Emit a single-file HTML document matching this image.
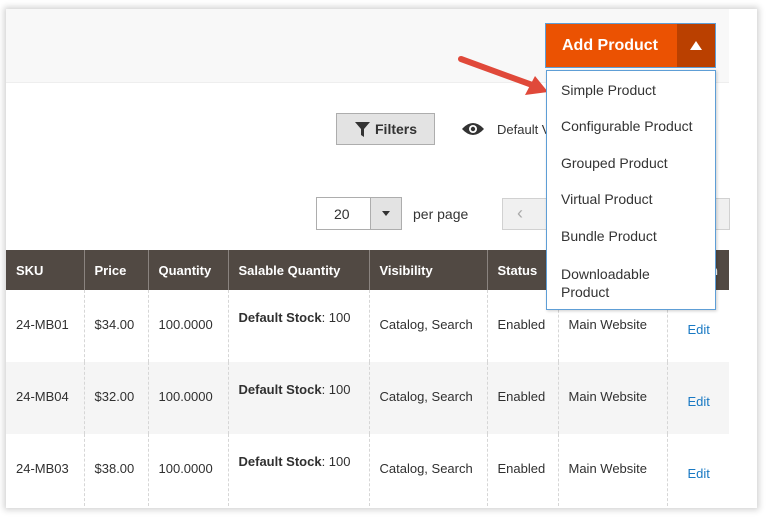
<!DOCTYPE html>
<html><head><style>
*{margin:0;padding:0;box-sizing:border-box}
body{width:768px;height:518px;background:#fff;font-family:"Liberation Sans",sans-serif;position:relative;overflow:hidden;color:#303030}
.card{position:absolute;left:6px;top:9px;width:751px;height:499px;background:#fff;box-shadow:0 0 6px 2px rgba(0,0,0,.18)}
.head{position:absolute;left:6px;top:9px;width:723px;height:74px;background:#f8f8f8;border-bottom:1px solid #eee}
.abs{position:absolute}
.btn{left:545px;top:23px;width:171px;height:45px;background:#eb5202;border:1px solid #5e9ed6;color:#fff;font-weight:bold;font-size:16px}
.btn span{position:absolute;left:16px;top:13px}
.btn i{position:absolute;right:0;top:0;width:38px;height:43px;background:#ba4000}
.btn i:after{content:"";position:absolute;left:13px;top:17px;border-left:6px solid transparent;border-right:6px solid transparent;border-bottom:9px solid #fff}
.dd{left:546px;top:70px;width:170px;height:240px;background:#fff;border:1px solid #5e9ed6;box-shadow:1px 1px 3px rgba(0,0,0,.2);z-index:5;font-size:14px;color:#333}
.dd div{position:absolute;left:14px}
table{position:absolute;left:6px;top:250px;width:723px;border-collapse:collapse;font-size:13px}
th{background:#514943;color:#fff;text-align:left;font-weight:bold;height:40px;padding:0 10px;border-left:1px solid #8a837f;font-size:13px}
th:first-child{border-left:none}
td{height:72px;padding:0 10px 4px;border-left:1px dashed #d6d6d6;color:#303030}
td:first-child{border-left:none}
tr.g td{background:#f5f5f5}
td.s{vertical-align:top;padding-top:20px}
a{color:#1979c3;text-decoration:none}
</style></head><body>
<div class="card"></div>
<div class="head"></div>
<div class="abs btn"><span>Add Product</span><i></i></div>
<svg class="abs" style="left:455px;top:52px" width="100" height="45"><line x1="6" y1="7" x2="80" y2="34" stroke="#e0493a" stroke-width="6" stroke-linecap="round"/><polygon points="93,40 70,43 80,24" fill="#e0493a"/></svg>
<div class="abs" style="left:336px;top:113px;width:99px;height:32px;background:#e3e3e3;border:1px solid #adadad;font-size:14px;font-weight:bold;color:#333">
<svg class="abs" style="left:18px;top:8px" width="16" height="15"><polygon points="0,0 15,0 9,7 9,15 6,13 6,7" fill="#333"/></svg><span class="abs" style="left:38px;top:7px">Filters</span></div>
<svg class="abs" style="left:461px;top:121px" width="24" height="16"><path d="M1 8 Q12 -4 23 8 Q12 20 1 8Z" fill="#333"/><circle cx="12" cy="8" r="4" fill="#fff"/><circle cx="12" cy="8" r="2.2" fill="#333"/></svg>
<div class="abs" style="left:497px;top:122px;font-size:13px;color:#333">Default V</div>
<div class="abs" style="left:316px;top:197px;width:86px;height:33px;border:1px solid #adadad;background:#fff;font-size:14px"><span class="abs" style="left:17px;top:8px">20</span><div class="abs" style="left:53px;top:0;width:31px;height:31px;background:#e3e3e3;border-left:1px solid #adadad"><i class="abs" style="left:11px;top:13px;border-left:4px solid transparent;border-right:4px solid transparent;border-top:5px solid #333"></i></div></div>
<div class="abs" style="left:413px;top:206px;font-size:14px;color:#333">per page</div>
<div class="abs" style="left:502px;top:198px;width:228px;height:32px;background:#f0f0f0;border:1px solid #d1d1d1;color:#aaa;font-size:18px"><span class="abs" style="left:14px;top:4px">‹</span></div>
<div class="abs dd">
<div style="top:11px">Simple Product</div>
<div style="top:47px">Configurable Product</div>
<div style="top:84px">Grouped Product</div>
<div style="top:120px">Virtual Product</div>
<div style="top:157px">Bundle Product</div>
<div style="top:194px;line-height:18px">Downloadable<br>Product</div>
</div>
<table>
<tr><th style="width:78px">SKU</th><th style="width:64px">Price</th><th style="width:80px">Quantity</th><th style="width:141px">Salable Quantity</th><th style="width:118px">Visibility</th><th style="width:71px">Status</th><th style="width:109px">Websites</th><th>Action</th></tr>
<tr><td>24-MB01</td><td>$34.00</td><td>100.0000</td><td class="s"><b>Default Stock</b>: 100</td><td>Catalog, Search</td><td>Enabled</td><td>Main Website</td><td style="padding:6px 0 0 20px"><a>Edit</a></td></tr>
<tr class="g"><td>24-MB04</td><td>$32.00</td><td>100.0000</td><td class="s"><b>Default Stock</b>: 100</td><td>Catalog, Search</td><td>Enabled</td><td>Main Website</td><td style="padding:6px 0 0 20px"><a>Edit</a></td></tr>
<tr><td>24-MB03</td><td>$38.00</td><td>100.0000</td><td class="s"><b>Default Stock</b>: 100</td><td>Catalog, Search</td><td>Enabled</td><td>Main Website</td><td style="padding:6px 0 0 20px"><a>Edit</a></td></tr>
</table>
</body></html>
